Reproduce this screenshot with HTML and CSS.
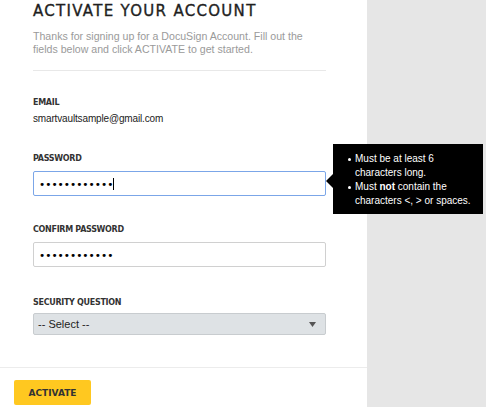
FILE: index.html
```html
<!DOCTYPE html>
<html lang="en">
<head>
<meta charset="utf-8">
<title>Activate your account</title>
<link rel="stylesheet" href="styles.css">
</head>
<body>
<div class="page">
  <main class="panel">
    <div class="content">
      <h1 class="title">ACTIVATE YOUR ACCOUNT</h1>
      <p class="intro">Thanks for signing up for a DocuSign Account. Fill out the fields below and click ACTIVATE to get started.</p>
      <div class="rule"></div>

      <div class="field field-first">
        <div class="label">EMAIL</div>
        <div class="value">smartvaultsample@gmail.com</div>
      </div>

      <div class="field">
        <label class="label label-input" for="pw">PASSWORD</label>
        <div class="input-wrap">
          <input id="pw" class="input input-focus" type="password" value="abcdefghijkl">
          <span class="caret"></span>
          <div class="tooltip">
            <ul class="tip-list">
              <li>Must be at least 6 characters long.</li>
              <li>Must <b>not</b> contain the characters &lt;, &gt; or spaces.</li>
            </ul>
          </div>
        </div>
      </div>

      <div class="field">
        <label class="label label-input" for="pw2">CONFIRM PASSWORD</label>
        <div class="input-wrap">
          <input id="pw2" class="input" type="password" value="abcdefghijkl">
        </div>
      </div>

      <div class="field field-security">
        <label class="label label-select" for="sq">SECURITY QUESTION</label>
        <div class="select-wrap">
          <select id="sq" class="select">
            <option>-- Select --</option>
          </select>
          <svg class="select-arrow" width="7" height="5" viewBox="0 0 7 5"><path d="M0 0H7L3.5 5Z" fill="#555"/></svg>
        </div>
      </div>
    </div>

    <footer class="footer">
      <button class="btn" type="button">ACTIVATE</button>
    </footer>
  </main>
  <aside class="side"></aside>
</div>
</body>
</html>
```

FILE: styles.css
```css
html, body {
  margin: 0;
  padding: 0;
  height: 100%;
}

body {
  font-family: "Liberation Sans", Arial, sans-serif;
  background: #e6e6e6;
}

.page {
  display: flex;
  height: 407px;
  overflow: hidden;
}

.panel {
  width: 367px;
  flex: none;
  background: #fff;
  display: flex;
  flex-direction: column;
  position: relative;
  z-index: 1;
}

.side {
  flex: 1;
  background: #e6e6e6;
}

.content {
  padding: 0 41px 0 33px;
}

.title {
  margin: 2px 0 0;
  font-family: "DejaVu Sans", sans-serif;
  font-weight: normal;
  font-size: 15px;
  line-height: 18px;
  letter-spacing: 1.3px;
  color: #1f1f1f;
  -webkit-text-stroke: 0.35px #1f1f1f;
}

.intro {
  margin: 10px 0 0;
  font-size: 10.6px;
  line-height: 13px;
  color: #9a9a9a;
}

.rule {
  margin-top: 14px;
  height: 1px;
  background: #e8e8e8;
}

.field {
  margin-top: 29px;
}

.field-first {
  margin-top: 27px;
}

.field-security {
  margin-top: 31px;
}

.label {
  display: block;
  font-family: "DejaVu Sans", sans-serif;
  font-weight: bold;
  font-size: 8px;
  line-height: 10px;
  letter-spacing: -0.3px;
  color: #333;
}

.label-input {
  margin-bottom: 7px;
}

.label-select {
  margin-bottom: 5px;
}

.value {
  margin-top: 4px;
  font-size: 10px;
  line-height: 13px;
  letter-spacing: -0.15px;
  color: #222;
}

.input-wrap {
  position: relative;
}

.input {
  display: block;
  box-sizing: border-box;
  width: 100%;
  height: 25px;
  margin: 0;
  padding: 0 5px;
  border: 1px solid #d0d0d0;
  border-radius: 2px;
  background: #fff;
  font-family: "DejaVu Sans", sans-serif;
  font-size: 10.5px;
  color: #000;
  outline: none;
}

.input-focus {
  border-color: #7ba6e8;
}

.caret {
  position: absolute;
  left: 80px;
  top: 7px;
  width: 1px;
  height: 12px;
  background: #000;
}

.tooltip {
  position: absolute;
  left: 300px;
  top: -27px;
  width: 150px;
  box-sizing: border-box;
  padding: 8px 6px 6px 22px;
  background: #000;
  color: #fff;
  font-size: 10px;
  line-height: 14px;
  z-index: 2;
}

.tooltip::before {
  content: "";
  position: absolute;
  left: -7px;
  top: 30px;
  border-style: solid;
  border-width: 7px 7px 7px 0;
  border-color: transparent #000 transparent transparent;
}

.tip-list {
  margin: 0;
  padding: 0;
  list-style: none;
}

.tip-list li {
  position: relative;
}

.tip-list li::before {
  content: "";
  position: absolute;
  left: -7px;
  top: 6px;
  width: 3px;
  height: 3px;
  border-radius: 50%;
  background: #fff;
}

.tip-list b {
  font-weight: bold;
}

.select-wrap {
  position: relative;
}

.select {
  display: block;
  box-sizing: border-box;
  width: 293px;
  height: 22px;
  margin: 0;
  padding: 0 0 0 4px;
  border: 1px solid #c8cccf;
  border-radius: 2px;
  background: #dee2e5;
  -webkit-appearance: none;
  appearance: none;
  font-family: "Liberation Sans", Arial, sans-serif;
  font-size: 11px;
  color: #222;
  outline: none;
}

.select-arrow {
  position: absolute;
  right: 10px;
  top: 9px;
}

.footer {
  margin-top: 32px;
  border-top: 1px solid #ececec;
  padding: 12px 14px 3px;
}

.btn {
  display: block;
  width: 77px;
  height: 25px;
  margin: 0;
  padding: 0;
  border: none;
  border-radius: 2px;
  background: #ffc820;
  font-family: "DejaVu Sans", sans-serif;
  font-weight: bold;
  font-size: 9px;
  letter-spacing: 0;
  color: #333;
  cursor: pointer;
}
```
